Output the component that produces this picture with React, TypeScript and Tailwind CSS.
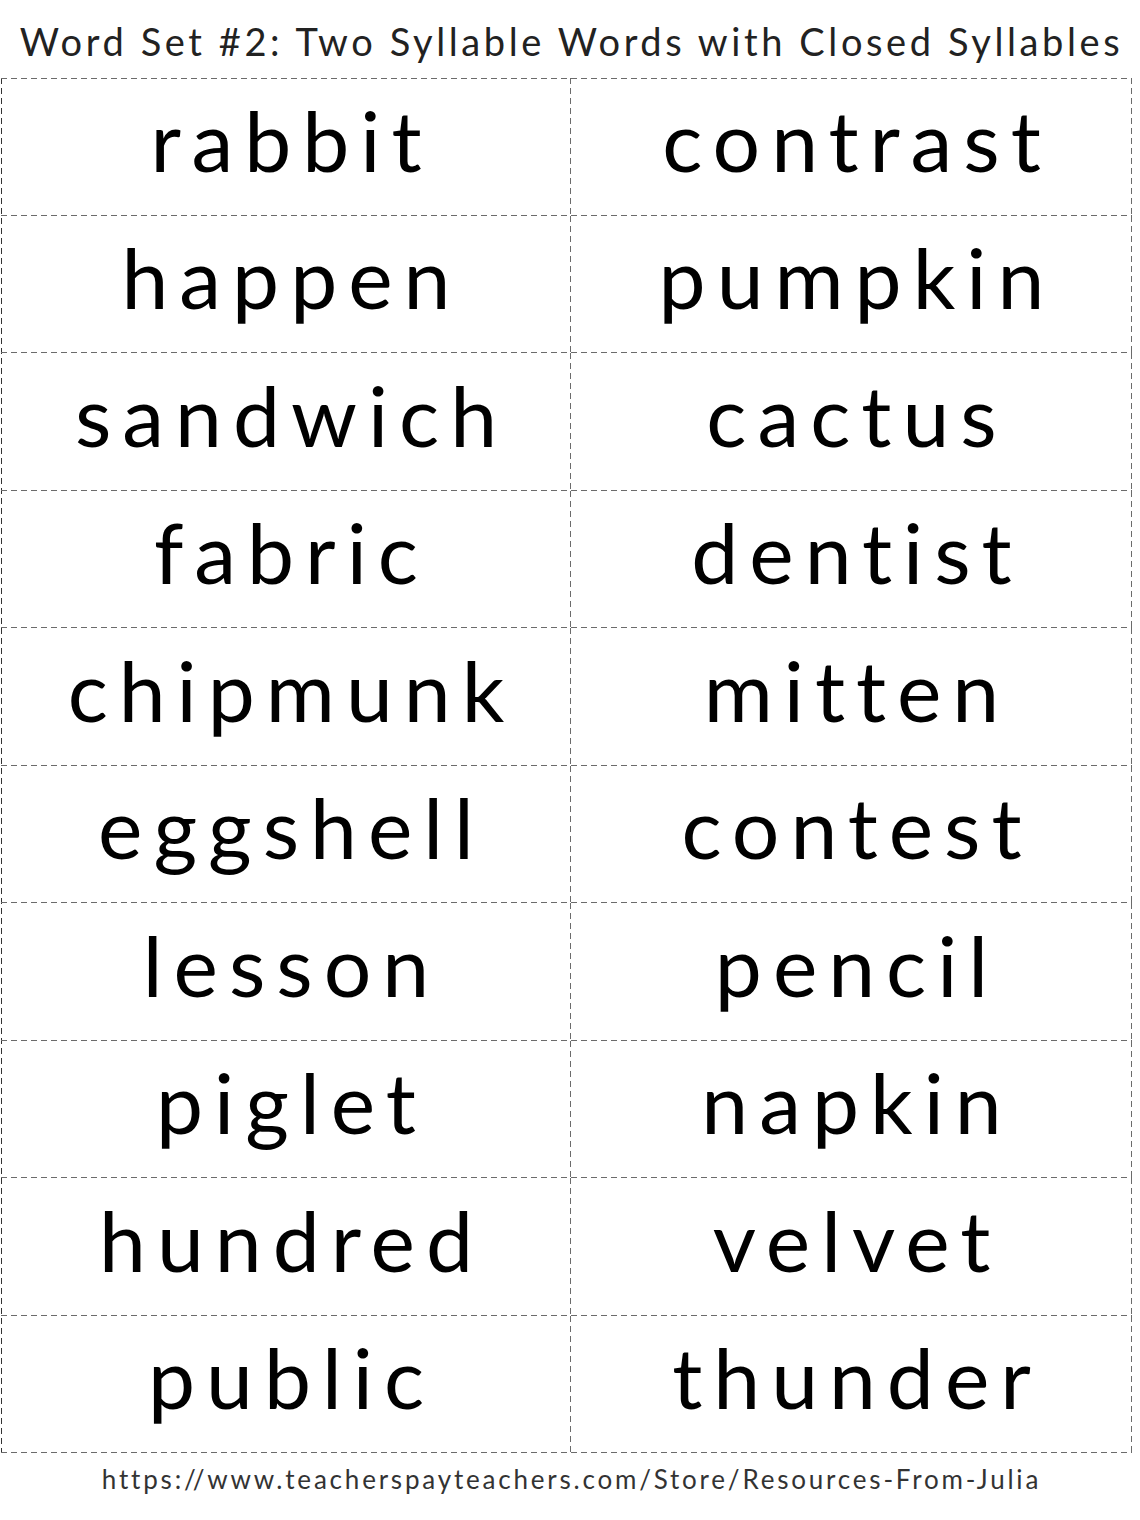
import React from "react";

const words: [string, string][] = [
  ["rabbit", "contrast"],
  ["happen", "pumpkin"],
  ["sandwich", "cactus"],
  ["fabric", "dentist"],
  ["chipmunk", "mitten"],
  ["eggshell", "contest"],
  ["lesson", "pencil"],
  ["piglet", "napkin"],
  ["hundred", "velvet"],
  ["public", "thunder"],
];

const cell =
  "h-[137.5px] flex items-center justify-center [background:linear-gradient(to_right,#6b6b6b_6px,transparent_6px)_left_bottom/10px_1px_repeat-x,linear-gradient(to_bottom,#6b6b6b_6px,transparent_6px)_right_top/1px_10px_repeat-y]";

export default function App() {
  return (
    <div className="w-[1140px] h-[1520px] bg-white overflow-hidden" style={{ fontFamily: "Lato, 'DejaVu Sans', sans-serif" }}>
      <div className="h-[78px] flex items-center justify-center pt-[4px]">
        <div className="text-[38px] leading-none text-[#222] tracking-[3.6px] whitespace-nowrap pl-[3px]">
          Word Set #2: Two Syllable Words with Closed Syllables
        </div>
      </div>
      <div className="ml-[1px] w-[1131px] grid grid-cols-[570px_561px] [background:linear-gradient(to_right,#6b6b6b_6px,transparent_6px)_left_top/10px_1px_repeat-x,linear-gradient(to_bottom,#333_6px,transparent_6px)_left_top/1px_10px_repeat-y]">
        {words.map(([a, b], i) => (
          <React.Fragment key={i}>
            <div className={cell}>
              <span className="text-[84px] leading-none text-black tracking-[11px] pl-[11px] -mt-[14px]">{a}</span>
            </div>
            <div className={cell}>
              <span className="text-[84px] leading-none text-black tracking-[11px] pl-[11px] -mt-[14px]">{b}</span>
            </div>
          </React.Fragment>
        ))}
      </div>
      <div className="h-[52px] flex items-center justify-center">
        <div className="text-[26px] leading-none text-[#333] tracking-[2.8px] whitespace-nowrap pl-[3px]">
          https://www.teacherspayteachers.com/Store/Resources-From-Julia
        </div>
      </div>
    </div>
  );
}
